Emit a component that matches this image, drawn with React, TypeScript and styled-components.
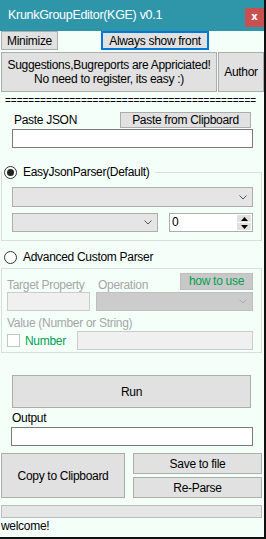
import * as React from 'react';
import styled, { createGlobalStyle } from 'styled-components';

const GlobalStyle = createGlobalStyle`
  html, body {
    margin: 0;
    padding: 0;
    background: #101010;
  }
  * {
    box-sizing: border-box;
  }
`;

const Frame = styled.div`
  width: 266px;
  height: 539px;
  background: #101010;
  overflow: hidden;
`;

const Window = styled.div`
  width: 264px;
  height: 537px;
  background: #f5fffa;
  color: #000;
  font-family: 'Liberation Sans', Arial, sans-serif;
  font-size: 12px;
  letter-spacing: -0.3px;
  line-height: 14px;
  display: flex;
  flex-direction: column;
`;

const TitleBar = styled.div`
  height: 31px;
  background: #2f96aa;
  display: flex;
  justify-content: space-between;
  align-items: flex-start;
  flex: none;
`;

const Title = styled.div`
  color: #fff;
  font-size: 12.5px;
  line-height: 31px;
  padding-left: 8px;
`;

const CloseButton = styled.div`
  width: 19px;
  height: 19px;
  margin-top: 8px;
  background: #c85050;
  color: #fff;
  font-family: 'DejaVu Sans', sans-serif;
  font-weight: bold;
  font-size: 10px;
  letter-spacing: 0;
  line-height: 18px;
  text-align: center;
`;

const Row = styled.div<{ $top?: number; $left?: number; $height?: number }>`
  display: flex;
  align-items: center;
  flex: none;
  margin-top: ${(p) => p.$top ?? 0}px;
  padding-left: ${(p) => p.$left ?? 0}px;
  height: ${(p) => (p.$height ? `${p.$height}px` : 'auto')};
`;

const Button = styled.div<{
  $w: number;
  $h: number;
  $ml?: number;
  $focus?: boolean;
}>`
  width: ${(p) => p.$w}px;
  height: ${(p) => p.$h}px;
  margin-left: ${(p) => p.$ml ?? 0}px;
  background: #e1e1e1;
  border: ${(p) => (p.$focus ? '2px solid #0078d7' : '1px solid #adadad')};
  display: flex;
  align-items: center;
  justify-content: center;
  text-align: center;
  line-height: 14px;
  white-space: nowrap;
  flex: none;
`;

const Separator = styled.div`
  height: 14px;
  margin-top: 2px;
  padding-left: 5px;
  font-size: 10px;
  line-height: 14px;
  white-space: nowrap;
  overflow: hidden;
  letter-spacing: 0;
  flex: none;
`;

const Label = styled.div<{ $w?: number; $ml?: number; $muted?: boolean }>`
  width: ${(p) => (p.$w ? `${p.$w}px` : 'auto')};
  margin-left: ${(p) => p.$ml ?? 0}px;
  color: ${(p) => (p.$muted ? '#a6a6a6' : '#000')};
  white-space: nowrap;
  flex: none;
`;

const TextBox = styled.div<{ $w: number; $ml?: number; $disabled?: boolean }>`
  width: ${(p) => p.$w}px;
  height: 19px;
  margin-left: ${(p) => p.$ml ?? 0}px;
  background: ${(p) => (p.$disabled ? '#f0f0f0' : '#fff')};
  border: 1px solid ${(p) => (p.$disabled ? '#cccccc' : '#7a7a7a')};
  flex: none;
`;

const Combo = styled.div<{ $w: number; $h?: number; $ml?: number; $disabled?: boolean }>`
  width: ${(p) => p.$w}px;
  height: ${(p) => p.$h ?? 19}px;
  margin-left: ${(p) => p.$ml ?? 0}px;
  background: ${(p) => (p.$disabled ? '#cccccc' : '#e5e5e5')};
  border: 1px solid ${(p) => (p.$disabled ? '#bfbfbf' : '#adadad')};
  display: flex;
  align-items: center;
  justify-content: flex-end;
  padding-right: 5px;
  flex: none;
  svg {
    stroke: ${(p) => (p.$disabled ? '#a8a8a8' : '#555')};
  }
`;

const Chevron = () => (
  <svg width="8" height="5" viewBox="0 0 8 5" fill="none" strokeWidth="1">
    <polyline points="0.5,0.5 4,4 7.5,0.5" />
  </svg>
);

const Numeric = styled.div`
  width: 84px;
  height: 19px;
  margin-left: 11px;
  background: #fff;
  border: 1px solid #adadad;
  display: flex;
  align-items: stretch;
  flex: none;
`;

const NumericValue = styled.div`
  flex: 1;
  padding-left: 2px;
  line-height: 17px;
`;

const Spin = styled.div`
  width: 14px;
  margin: 1px 1px 1px 0;
  display: flex;
  flex-direction: column;
  gap: 1px;
`;

const SpinHalf = styled.div`
  flex: 1;
  background: #e1e1e1;
  display: flex;
  align-items: center;
  justify-content: center;
`;

const GroupBox = styled.fieldset`
  margin: 0 0 0 1px;
  width: 261px;
  border: 1px solid #dcdcdc;
  padding: 7px 8px 8px 10px;
  min-width: 0;
  flex: none;
`;

const Legend = styled.legend`
  margin-left: -10px;
  padding: 0 6px 0 2px;
  height: 16px;
  line-height: 16px;
  display: flex;
  align-items: center;
`;

const RadioCircle = styled.span<{ $checked?: boolean }>`
  width: 13px;
  height: 13px;
  border-radius: 50%;
  border: 1px solid #333;
  background: #fff;
  display: inline-flex;
  align-items: center;
  justify-content: center;
  margin-right: 6px;
  flex: none;
  &::after {
    content: '';
    width: 7px;
    height: 7px;
    border-radius: 50%;
    background: ${(p) => (p.$checked ? '#222' : 'transparent')};
  }
`;

const RadioRow = styled.div`
  display: flex;
  align-items: center;
  height: 16px;
  margin-top: 8px;
  padding-left: 4px;
  flex: none;
`;

const Panel = styled.div`
  margin: 3px 0 0 1px;
  width: 261px;
  border: 1px solid #dcdcdc;
  padding: 4px 0 2px 5px;
  display: flex;
  flex-direction: column;
  flex: none;
`;

const HowToButton = styled.div`
  width: 73px;
  height: 17px;
  margin-left: auto;
  margin-right: 8px;
  align-self: flex-start;
  background: #c8c8c8;
  border: 1px solid #bdbdbd;
  color: #00a050;
  text-align: center;
  line-height: 15px;
`;

const CheckBox = styled.span`
  width: 13px;
  height: 13px;
  background: #fff;
  border: 1px solid #c4c4c4;
  flex: none;
`;

const GreenText = styled.span`
  color: #00a050;
  margin-left: 5px;
  width: 52px;
  flex: none;
`;

const ButtonStack = styled.div`
  display: flex;
  flex-direction: column;
  gap: 3px;
  margin-left: 8px;
`;

const Progress = styled.div`
  width: 261px;
  height: 13px;
  margin: 7px 0 0 1px;
  background: #e6e6e6;
  border: 1px solid #bcbcbc;
  flex: none;
`;

const Status = styled.div`
  line-height: 17px;
  padding-left: 1px;
  flex: none;
`;

export default function App() {
  return (
    <Frame>
      <GlobalStyle />
      <Window>
        <TitleBar>
          <Title>KrunkGroupEditor(KGE) v0.1</Title>
          <CloseButton>x</CloseButton>
        </TitleBar>

        <Row $left={1}>
          <Button $w={57} $h={19}>Minimize</Button>
          <Button $w={108} $h={19} $ml={43} $focus>
            Always show front
          </Button>
        </Row>

        <Row $top={2} $left={1}>
          <Button $w={216} $h={40}>
            Suggestions,Bugreports are Appriciated!
            <br />
            No need to register, its easy :)
          </Button>
          <Button $w={46} $h={40} $ml={1}>
            Author
          </Button>
        </Row>

        <Separator>{'='.repeat(43)}</Separator>

        <Row $top={4} $left={14} $height={15}>
          <Label $w={106}>Paste JSON</Label>
          <Button $w={131} $h={16}>Paste from Clipboard</Button>
        </Row>

        <Row $top={2} $left={12}>
          <TextBox $w={241} />
        </Row>

        <Row $top={16}>
          <GroupBox>
            <Legend>
              <RadioCircle $checked />
              EasyJsonParser(Default)
            </Legend>
            <Combo $w={241} $h={20}>
              <Chevron />
            </Combo>
            <Row $top={6}>
              <Combo $w={146}>
                <Chevron />
              </Combo>
              <Numeric>
                <NumericValue>0</NumericValue>
                <Spin>
                  <SpinHalf>
                    <svg width="7" height="4" viewBox="0 0 7 4">
                      <polygon points="3.5,0 7,4 0,4" fill="#000" />
                    </svg>
                  </SpinHalf>
                  <SpinHalf>
                    <svg width="7" height="4" viewBox="0 0 7 4">
                      <polygon points="0,0 7,0 3.5,4" fill="#000" />
                    </svg>
                  </SpinHalf>
                </Spin>
              </Numeric>
            </Row>
          </GroupBox>
        </Row>

        <RadioRow>
          <RadioCircle />
          Advanced Custom Parser
        </RadioRow>

        <Panel>
          <Row $height={19} style={{ alignItems: 'flex-end' }}>
            <Label $w={91} $muted>
              Target Property
            </Label>
            <Label $muted>Operation</Label>
            <HowToButton>how to use</HowToButton>
          </Row>
          <Row>
            <TextBox $w={83} $disabled />
            <Combo $w={157} $ml={6} $disabled>
              <Chevron />
            </Combo>
          </Row>
          <Row $top={5} $height={14}>
            <Label $muted>Value (Number or String)</Label>
          </Row>
          <Row $top={1}>
            <CheckBox />
            <GreenText>Number</GreenText>
            <TextBox $w={176} $disabled />
          </Row>
        </Panel>

        <Row $top={22} $left={12}>
          <Button $w={239} $h={33}>
            Run
          </Button>
        </Row>

        <Row $top={3} $left={12} $height={14}>
          <Label>Output</Label>
        </Row>

        <Row $top={2} $left={11}>
          <TextBox $w={242} />
        </Row>

        <Row $top={7} $left={1}>
          <Button $w={124} $h={45}>
            Copy to Clipboard
          </Button>
          <ButtonStack>
            <Button $w={129} $h={21}>
              Save to file
            </Button>
            <Button $w={129} $h={21}>
              Re-Parse
            </Button>
          </ButtonStack>
        </Row>

        <Progress />
        <Status>welcome!</Status>
      </Window>
    </Frame>
  );
}
